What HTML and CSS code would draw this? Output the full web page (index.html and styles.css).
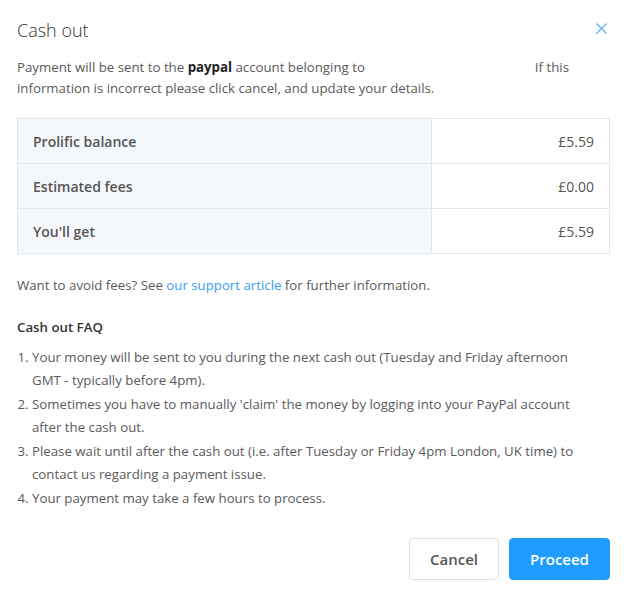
FILE: index.html
```html
<!DOCTYPE html>
<html>
<head>
<meta charset="utf-8">
<link rel="stylesheet" href="styles.css">
</head>
<body>
<div class="modal">
  <div class="header">
    <h1 class="title">Cash out</h1>
    <span class="close" aria-label="close">
      <svg width="11" height="11" viewBox="0 0 11 11"><path d="M0.5 0.5 L10.5 10.5 M10.5 0.5 L0.5 10.5" stroke="#5aadff" stroke-width="1.2" fill="none"/></svg>
    </span>
  </div>
  <p class="intro"><span>Payment will be sent to the </span><b>paypal</b><span> account belonging to</span><span class="redacted"></span><span>If this </span><span>information is incorrect please click cancel, and update your details.</span></p>
  <table class="summary">
    <tr><th>Prolific balance</th><td>£5.59</td></tr>
    <tr><th>Estimated fees</th><td>£0.00</td></tr>
    <tr><th>You'll get</th><td>£5.59</td></tr>
  </table>
  <p class="fees">Want to avoid fees? See <a href="#">our support article</a> for further information.</p>
  <h2 class="faq-title">Cash out FAQ</h2>
  <ol class="faq">
    <li>Your money will be sent to you during the next cash out (Tuesday and Friday afternoon GMT - typically before 4pm).</li>
    <li>Sometimes you have to manually 'claim' the money by logging into your PayPal account after the cash out.</li>
    <li>Please wait until after the cash out (i.e. after Tuesday or Friday 4pm London, UK time) to contact us regarding a payment issue.</li>
    <li>Your payment may take a few hours to process.</li>
  </ol>
  <div class="actions">
    <button class="btn btn-default">Cancel</button>
    <button class="btn btn-primary">Proceed</button>
  </div>
</div>
</body>
</html>
```
FILE: styles.css
```css
html, body {
  margin: 0;
  padding: 0;
  background: #fff;
}
body {
  font-family: "Open Sans", "Noto Sans", sans-serif;
  font-size: 13.25px;
  color: #5a5a5a;
}
.modal {
  padding: 15px 15px 0 17px;
}
.header {
  display: flex;
  justify-content: space-between;
  align-items: center;
  height: 30px;
}
.title {
  margin: 0;
  font-size: 18px;
  font-weight: 300;
  color: #333;
}
.close {
  display: flex;
  margin-right: 3px;
  margin-top: -4px;
}
.intro {
  margin: 12px 0 0;
  line-height: 21px;
}
.intro b {
  color: #222;
  font-weight: 700;
}
.redacted {
  display: inline-block;
  width: 170px;
  height: 1px;
}
.summary {
  width: 100%;
  margin-top: 19px;
  border-collapse: collapse;
  font-size: 14px;
}
.summary th, .summary td {
  border: 1px solid #e1e7ed;
  height: 44px;
  padding: 0 15px;
}
.summary th {
  width: 383px;
  text-align: left;
  font-weight: 600;
  background: #f5f8fb;
  color: #555;
}
.summary td {
  text-align: right;
  color: #555;
}
.fees {
  margin: 21px 0 0;
  line-height: 20px;
}
.fees a {
  color: #3a9cf0;
  text-decoration: none;
}
.faq-title {
  margin: 22px 0 0;
  font-size: 13.25px;
  font-weight: 600;
  color: #333;
  line-height: 20px;
}
.faq {
  margin: 9px 0 0;
  padding: 0 25px 0 15px;
  line-height: 23px;
}
.faq li {
  margin-bottom: 1px;
}
.actions {
  display: flex;
  justify-content: flex-end;
  gap: 10px;
  margin-top: 28px;
}
.btn {
  font-family: inherit;
  font-size: 15px;
  font-weight: 600;
  height: 42px;
  border-radius: 4px;
  cursor: pointer;
}
.btn-default {
  width: 90px;
  background: #fff;
  color: #555;
  border: 1px solid #dcdfe3;
}
.btn-primary {
  width: 101px;
  background: #1e9cff;
  color: #fff;
  border: 1px solid #1e9cff;
}
```
